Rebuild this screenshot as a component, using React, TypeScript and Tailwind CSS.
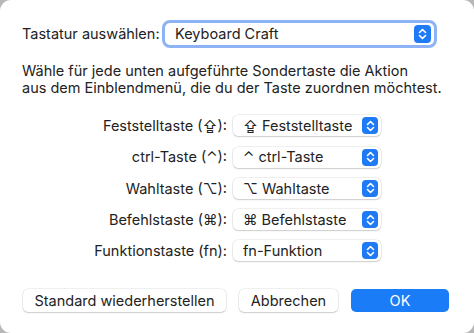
import React from "react";

const font = { fontFamily: "Inter, 'Liberation Sans', 'DejaVu Sans', sans-serif" };

function Stepper({ size = "sm" }: { size?: "sm" | "lg" }) {
  return (
    <div
      className={`flex items-center justify-center rounded-[4px] bg-[#1f7af5] ${
        size === "lg" ? "w-[17px] h-[18px]" : "w-[16px] h-[17px]"
      }`}
    >
      <svg width="9" height="12" viewBox="0 0 9 12" fill="none" stroke="white" strokeWidth="1.6" strokeLinecap="round" strokeLinejoin="round">
        <path d="M1.5 4.5L4.5 1.5L7.5 4.5" />
        <path d="M1.5 7.5L4.5 10.5L7.5 7.5" />
      </svg>
    </div>
  );
}

const rows = [
  { label: "Feststelltaste (⇪):", value: "⇪ Feststelltaste" },
  { label: "ctrl-Taste (⌃):", value: "⌃ ctrl-Taste" },
  { label: "Wahltaste (⌥):", value: "⌥ Wahltaste" },
  { label: "Befehlstaste (⌘):", value: "⌘ Befehlstaste" },
  { label: "Funktionstaste (fn):", value: "fn-Funktion" },
];

const raised =
  "bg-white shadow-[0_0_0_0.5px_rgba(0,0,0,0.12),0_1px_1.5px_rgba(0,0,0,0.15)]";

export default function App() {
  return (
    <div className="w-[474px] h-[333px] bg-[#b8b8b8]" style={font}>
      <div className="w-full h-full bg-white rounded-[11px] flex flex-col text-[#222] text-[14.5px]">
        {/* keyboard select */}
        <div className="flex items-center pt-[20px] pl-[22px]">
          <span className="w-[140px]">Tastatur auswählen:</span>
          <div className="w-[275px] h-[28px] rounded-[8px] border-[3px] border-[#8db3f4] flex items-center pl-[10px] pr-[3px] justify-between">
            <span>Keyboard Craft</span>
            <Stepper size="lg" />
          </div>
        </div>

        <p className="mt-[14px] pl-[22px] leading-[17px]">
          Wähle für jede unten aufgeführte Sondertaste die Aktion
          <br />
          aus dem Einblendmenü, die du der Taste zuordnen möchtest.
        </p>

        {/* modifier rows */}
        <div className="mt-[19px] flex flex-col gap-[9.5px]">
          {rows.map((r) => (
            <div key={r.label} className="flex items-center">
              <span className="w-[227px] text-right">{r.label}</span>
              <div className={`ml-[6px] w-[148px] h-[21px] rounded-[5px] ${raised} flex items-center justify-between pl-[10px] pr-[3px]`}>
                <span>{r.value}</span>
                <Stepper />
              </div>
            </div>
          ))}
        </div>

        {/* buttons */}
        <div className="mt-auto mb-[21px] flex items-center pl-[23px] gap-[13px]">
          <button className={`w-[203px] h-[23px] rounded-[5px] ${raised}`}>
            Standard wiederherstellen
          </button>
          <button className={`w-[99px] h-[23px] rounded-[5px] ${raised}`}>
            Abbrechen
          </button>
          <button className="w-[98px] h-[23px] rounded-[5px] bg-[#1a7cf6] text-white">
            OK
          </button>
        </div>
      </div>
    </div>
  );
}
